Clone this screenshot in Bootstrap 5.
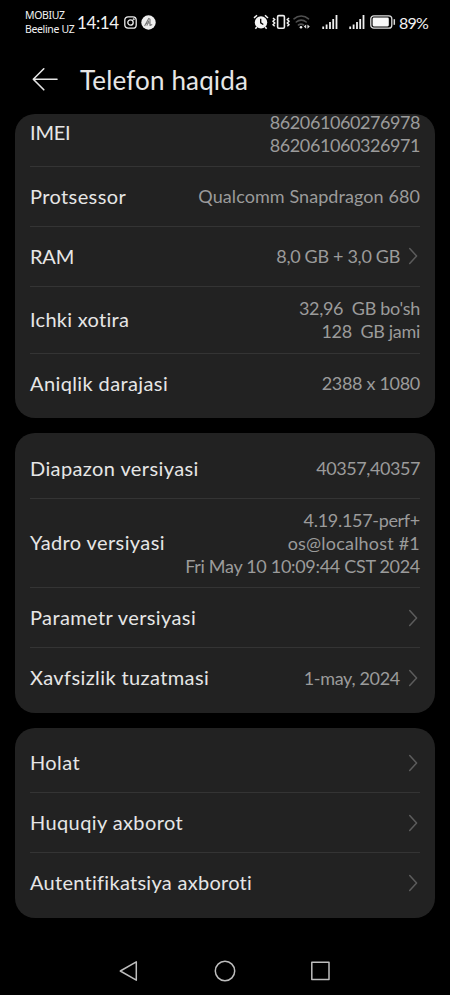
<!DOCTYPE html>
<html lang="uz">
<head>
<meta charset="utf-8">
<meta name="viewport" content="width=device-width, initial-scale=1">
<title>Telefon haqida</title>
<link href="https://cdn.jsdelivr.net/npm/bootstrap@5.3.0/dist/css/bootstrap.min.css" rel="stylesheet">
<style>
body{background:#000;color:#e6e6e6;font-family:Lato,"Noto Sans",sans-serif;height:995px;overflow:hidden;font-variant-ligatures:none}
svg{display:block;flex:none}
.status-bar{height:44px;padding:0 22px 0 25px;color:#f2f2f2}
.carriers{font:10.5px/14px "Noto Sans",sans-serif;width:52px;white-space:nowrap;letter-spacing:-.35px}
.clock{font-size:17px;line-height:20px;width:41px;margin-right:6px;padding-top:1px;white-space:nowrap;letter-spacing:-.4px}
.battery-level{font-size:16px;line-height:20px;padding-top:1px;white-space:nowrap;letter-spacing:-.8px}
.status-icons{gap:3px}
.signals{gap:11px;margin-left:8px}
.battery{margin:0 0 0 2px}
.title-bar{height:70px;padding:0 32px}
.page-title{font-size:26px;line-height:32px;margin:1px 0 0 22px;letter-spacing:.15px}
.panel{background:#222;border-radius:20px;margin:0 15px;padding:6px 15px 4.5px}
.panel-scrolled{height:304px;padding-top:0;padding-bottom:4.5px}
.panel-last{padding-top:5.5px}
.setting{min-height:60px;border-bottom:1px solid #343434;flex:none}
.setting:last-child{border-bottom:0}
.setting-2{min-height:66.5px}
.setting-3{min-height:89px}
.name{font-size:20px;line-height:24px;padding-bottom:2px;white-space:nowrap;letter-spacing:.39px}
.name-caps{letter-spacing:-.2px}
.name-long{letter-spacing:.28px}
.value{font-size:18px;line-height:22.8px;padding-top:.6px;color:#9b9b9b;text-align:right;white-space:pre;letter-spacing:-.31px}
.digits{letter-spacing:-.43px}
.words{letter-spacing:.08px}
.host{letter-spacing:.2px}
.nav-keys{height:48px}
</style>
<script src="https://cdn.jsdelivr.net/npm/bootstrap@5.3.0/dist/js/bootstrap.bundle.min.js" defer></script>
</head>
<body class="d-flex flex-column">
<svg width="0" height="0" class="position-absolute"><defs>
<symbol id="chev" viewBox="0 0 12 20"><path d="M1.7 2.6 8.6 10l-6.9 7.4" fill="none" stroke="#5c5c5c" stroke-width="1.5" stroke-linecap="round" stroke-linejoin="round"/></symbol>
<symbol id="bars" viewBox="0 0 16 14"><path d="M1.2 11.5V14M4.6 9.5V14M8 7V14M11.2 4V14M14.5 0V14" stroke="#eee" stroke-width="1.8"/></symbol>
</defs></svg>

<header class="status-bar d-flex align-items-center">
  <div class="carriers">MOBIUZ<br>Beeline UZ</div>
  <div class="clock">14:14</div>
  <svg width="13" height="13" viewBox="0 0 13 13" fill="none" stroke="#eee" stroke-width="1.3"><rect x=".8" y=".8" width="11.4" height="11.4" rx="3.3"/><circle cx="6.5" cy="6.5" r="2.7"/><circle cx="9.7" cy="3.3" r=".4"/></svg>
  <svg width="15" height="15" viewBox="0 0 15 15" class="ms-1"><circle cx="7.5" cy="7.5" r="7.2" fill="#eee"/><path d="M3.6 11 7.7 3.4 9 4.2V10.4L11.2 9.6M4.5 8.6 9 7.7M5.8 10.6l2-4.8" fill="none" stroke="#777" stroke-width="1.1" stroke-linejoin="round"/></svg>
  <div class="status-icons d-flex align-items-center ms-auto">
    <svg width="16" height="16" viewBox="0 0 16 16"><circle cx="8" cy="8.4" r="6.2" fill="#f4f4f4"/><path d="M1 4 4 1.2M12 1.2 15 4M3.8 13 2.4 14.8M12.2 13l1.4 1.8" stroke="#f4f4f4" stroke-width="1.5"/><path d="M7.7 4.8v4l2.6 1.7" fill="none" stroke="#000" stroke-width="1.3"/></svg>
    <svg width="18" height="16" viewBox="0 0 18 16" fill="none" stroke="#eee"><rect x="5.6" y="1.6" width="6.8" height="12.6" rx="1.2" stroke-width="1.6"/><path d="M1 4 2.7 5.6 1 7.3 2.7 9 1 10.7l1.7 1.6M17 4 15.3 5.6 17 7.3 15.3 9l1.7 1.7-1.7 1.6" stroke-width="1.5"/></svg>
    <svg width="18" height="16" viewBox="0 0 18 16" fill="none" stroke="#505050" stroke-width="1.6" stroke-linecap="round"><path d="M1 4.8a11 11 0 0 1 14.5 0M3.3 8a7.6 7.6 0 0 1 9.9 0M5.5 11a4.3 4.3 0 0 1 5 0"/><circle cx="8" cy="13.3" r="1.3" fill="#eee" stroke="none"/><path d="m13.2 10.4-2.4 2.2 2.4 2.2zM14.4 10.4l2.4 2.2-2.4 2.2z" fill="#ddd" stroke="none"/></svg>
    <div class="signals d-flex">
      <svg width="16" height="14"><use href="#bars"/></svg>
      <svg width="16" height="14"><use href="#bars"/></svg>
    </div>
    <svg class="battery" width="26" height="14" viewBox="0 0 26 14"><rect x=".8" y=".8" width="21" height="12.4" rx="3" fill="none" stroke="#ddd" stroke-width="1.3"/><rect x="2.6" y="2.6" width="16.2" height="8.8" rx="1.3" fill="#f8f8f8"/><path d="M24.3 4.2v5.6" stroke="#ddd" stroke-width="1.5"/></svg>
    <div class="battery-level">89%</div>
  </div>
</header>

<div class="title-bar d-flex align-items-center">
  <svg width="26" height="24" viewBox="0 0 26 24" fill="none" stroke="#e6e6e6" stroke-width="1.6" stroke-linecap="round" stroke-linejoin="round"><path d="M25 12.3H1.3M11.8 1.8 1.3 12.3l10.5 10.5"/></svg>
  <h1 class="page-title fw-normal">Telefon haqida</h1>
</div>

<main class="d-flex flex-column">
  <section class="panel panel-scrolled d-flex flex-column justify-content-end">
    <div class="setting setting-2 d-flex align-items-center justify-content-between"><span class="name name-caps">IMEI</span><span class="value digits">862061060276978
862061060326971</span></div>
    <div class="setting d-flex align-items-center justify-content-between"><span class="name">Protsessor</span><span class="value words">Qualcomm Snapdragon 680</span></div>
    <div class="setting d-flex align-items-center justify-content-between"><span class="name name-caps">RAM</span><span class="d-flex align-items-center gap-2"><span class="value">8,0 GB + 3,0 GB</span><svg width="12" height="20"><use href="#chev"/></svg></span></div>
    <div class="setting setting-2 d-flex align-items-center justify-content-between"><span class="name name-long">Ichki xotira</span><span class="value">32,96  GB bo'sh
128  GB jami</span></div>
    <div class="setting d-flex align-items-center justify-content-between"><span class="name">Aniqlik darajasi</span><span class="value">2388 x 1080</span></div>
  </section>
  <section class="panel" style="margin-top:15px">
    <div class="setting d-flex align-items-center justify-content-between"><span class="name">Diapazon versiyasi</span><span class="value digits">40357,40357</span></div>
    <div class="setting setting-3 d-flex align-items-center justify-content-between"><span class="name">Yadro versiyasi</span><span class="value">4.19.157-perf+
<span class="host">os@localhost #1</span>
Fri May 10 10:09:44 CST 2024</span></div>
    <div class="setting d-flex align-items-center justify-content-between"><span class="name">Parametr versiyasi</span><svg width="12" height="20"><use href="#chev"/></svg></div>
    <div class="setting d-flex align-items-center justify-content-between"><span class="name">Xavfsizlik tuzatmasi</span><span class="d-flex align-items-center gap-2"><span class="value">1-may, 2024</span><svg width="12" height="20"><use href="#chev"/></svg></span></div>
  </section>
  <section class="panel panel-last" style="margin-top:15px">
    <div class="setting d-flex align-items-center justify-content-between"><span class="name">Holat</span><svg width="12" height="20"><use href="#chev"/></svg></div>
    <div class="setting d-flex align-items-center justify-content-between"><span class="name">Huquqiy axborot</span><svg width="12" height="20"><use href="#chev"/></svg></div>
    <div class="setting d-flex align-items-center justify-content-between"><span class="name name-long">Autentifikatsiya axboroti</span><svg width="12" height="20"><use href="#chev"/></svg></div>
  </section>
</main>

<footer class="nav-keys mt-auto d-flex justify-content-center align-items-center">
  <svg width="212" height="22" viewBox="0 0 212 22" fill="none" stroke="#bdbdbd" stroke-width="1.5" stroke-linejoin="round"><path d="M17.3 1.8v18.4L1.3 11z"/><circle cx="106" cy="11" r="9.7"/><rect x="192.8" y="2.2" width="17.2" height="17.2"/></svg>
</footer>
</body>
</html>
